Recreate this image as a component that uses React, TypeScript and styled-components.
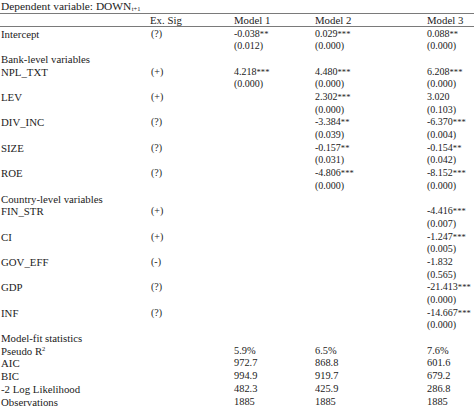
import React from "react";
import styled, { createGlobalStyle } from "styled-components";

const GlobalStyle = createGlobalStyle`
  html, body {
    margin: 0;
    padding: 0;
    background: #ffffff;
  }
  body {
    font-family: "Liberation Serif", "Times New Roman", serif;
    color: #222222;
    width: 474px;
    overflow: hidden;
  }
`;

const COLS = "150px 84px 81px 112px 1fr";

const Page = styled.div`
  width: 474px;
  height: 410px;
  overflow: hidden;
  background: #ffffff;
`;

const Caption = styled.div`
  height: 13px;
  line-height: 13px;
  font-size: 11.4px;
  padding-left: 1px;
  white-space: nowrap;
`;

const Sub = styled.sub`
  font-size: 6.5px;
  vertical-align: -1px;
  line-height: 0;
  margin-left: 0.5px;
`;

const Sup = styled.sup`
  font-size: 6.5px;
  vertical-align: 4px;
  line-height: 0;
`;

const HeaderRow = styled.div`
  display: grid;
  grid-template-columns: ${COLS};
  height: 12px;
  line-height: 12px;
  border-top: 1px solid #7a7a7a;
  border-bottom: 1px solid #7a7a7a;
  font-size: 10.8px;
  white-space: nowrap;
`;

const Body = styled.div`
  padding-top: 0.6px;
`;

const Row = styled.div`
  display: grid;
  grid-template-columns: ${COLS};
  height: 12.7px;
  line-height: 12.7px;
  white-space: nowrap;
`;

const Label = styled.div<{ $span?: boolean }>`
  font-size: 10.8px;
  padding-left: 1px;
  grid-column: ${(p) => (p.$span ? "1 / -1" : "auto")};
`;

const Sig = styled.div`
  font-size: 10px;
  padding-left: 1px;
`;

const Num = styled.div<{ $stat?: boolean }>`
  font-size: ${(p) => (p.$stat ? "10.4px" : "10px")};
`;

const Stars = styled.span`
  font-size: 8.5px;
  letter-spacing: 0.1px;
`;

type Cell = string;
type DataRow =
  | { kind: "section"; label: string }
  | { kind: "row"; label?: React.ReactNode; sig?: string; vals: Cell[]; stat?: boolean };

const rows: DataRow[] = [
  { kind: "row", label: "Intercept", sig: "(?)", vals: ["-0.038**", "0.029***", "0.088**"] },
  { kind: "row", vals: ["(0.012)", "(0.000)", "(0.000)"] },
  { kind: "section", label: "Bank-level variables" },
  { kind: "row", label: "NPL_TXT", sig: "(+)", vals: ["4.218***", "4.480***", "6.208***"] },
  { kind: "row", vals: ["(0.000)", "(0.000)", "(0.000)"] },
  { kind: "row", label: "LEV", sig: "(+)", vals: ["", "2.302***", "3.020"] },
  { kind: "row", vals: ["", "(0.000)", "(0.103)"] },
  { kind: "row", label: "DIV_INC", sig: "(?)", vals: ["", "-3.384**", "-6.370***"] },
  { kind: "row", vals: ["", "(0.039)", "(0.004)"] },
  { kind: "row", label: "SIZE", sig: "(?)", vals: ["", "-0.157**", "-0.154**"] },
  { kind: "row", vals: ["", "(0.031)", "(0.042)"] },
  { kind: "row", label: "ROE", sig: "(?)", vals: ["", "-4.806***", "-8.152***"] },
  { kind: "row", vals: ["", "(0.000)", "(0.000)"] },
  { kind: "section", label: "Country-level variables" },
  { kind: "row", label: "FIN_STR", sig: "(+)", vals: ["", "", "-4.416***"] },
  { kind: "row", vals: ["", "", "(0.007)"] },
  { kind: "row", label: "CI", sig: "(+)", vals: ["", "", "-1.247***"] },
  { kind: "row", vals: ["", "", "(0.005)"] },
  { kind: "row", label: "GOV_EFF", sig: "(-)", vals: ["", "", "-1.832"] },
  { kind: "row", vals: ["", "", "(0.565)"] },
  { kind: "row", label: "GDP", sig: "(?)", vals: ["", "", "-21.413***"] },
  { kind: "row", vals: ["", "", "(0.000)"] },
  { kind: "row", label: "INF", sig: "(?)", vals: ["", "", "-14.667***"] },
  { kind: "row", vals: ["", "", "(0.000)"] },
  { kind: "section", label: "Model-fit statistics" },
  {
    kind: "row",
    label: (
      <>
        Pseudo R<Sup>2</Sup>
      </>
    ),
    vals: ["5.9%", "6.5%", "7.6%"],
    stat: true,
  },
  { kind: "row", label: "AIC", vals: ["972.7", "868.8", "601.6"], stat: true },
  { kind: "row", label: "BIC", vals: ["994.9", "919.7", "679.2"], stat: true },
  { kind: "row", label: "-2 Log Likelihood", vals: ["482.3", "425.9", "286.8"], stat: true },
  { kind: "row", label: "Observations", vals: ["1885", "1885", "1885"], stat: true },
];

function renderValue(v: string) {
  const m = v.match(/^(.*?)(\*+)$/);
  if (!m) return v;
  return (
    <>
      {m[1]}
      <Stars>{m[2]}</Stars>
    </>
  );
}

export default function App() {
  return (
    <Page>
      <GlobalStyle />
      <Caption>
        Dependent variable: DOWN<Sub>t+1</Sub>
      </Caption>
      <HeaderRow>
        <div />
        <div>Ex. Sig</div>
        <div>Model 1</div>
        <div>Model 2</div>
        <div>Model 3</div>
      </HeaderRow>
      <Body>
        {rows.map((r, i) =>
          r.kind === "section" ? (
            <Row key={i}>
              <Label $span>{r.label}</Label>
            </Row>
          ) : (
            <Row key={i}>
              <Label>{r.label}</Label>
              <Sig>{r.sig}</Sig>
              {r.vals.map((v, j) => (
                <Num key={j} $stat={r.stat}>
                  {renderValue(v)}
                </Num>
              ))}
            </Row>
          )
        )}
      </Body>
    </Page>
  );
}
